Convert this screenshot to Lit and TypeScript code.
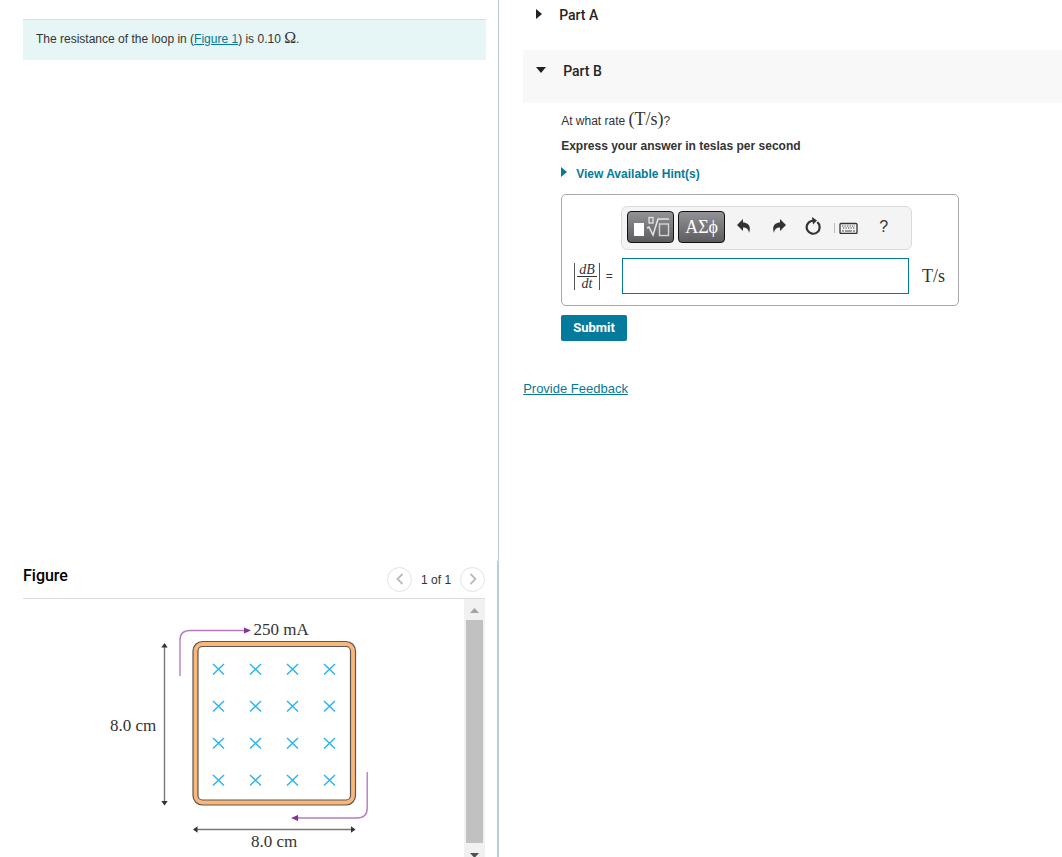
import { LitElement, html, svg, css } from "lit";
import { customElement, state } from "lit/decorators.js";

@customElement("loop-figure")
class LoopFigure extends LitElement {
  static styles = css`
    :host { display: block; }
    svg { display: block; }
    text { font-family: "Liberation Serif", serif; font-size: 17px; fill: #333; }
    .cross { stroke: #2eb4ee; stroke-width: 1.5; }
    .dim { stroke: #777; stroke-width: 1.4; }
    .head { fill: #333; }
    .current { stroke: #b57cc2; stroke-width: 1.4; fill: none; }
    .current-head { fill: #86309a; }
  `;

  render() {
    const steps = [0, 1, 2, 3];
    return html`
      <svg width="441" height="258" viewBox="23 599 441 258" role="img" aria-label="Square loop with current arrows">
        <path class="current" d="M180 676V640Q180 630.500 190 630.500H246" />
        <path class="current-head" d="M251 630.500l-7-3v6z" />
        <text x="253.500" y="635">250 mA</text>
        <rect x="195.500" y="644" width="157.500" height="158.500" rx="7" fill="none" stroke="#5d5651" stroke-width="6.200" />
        <rect x="195.500" y="644" width="157.500" height="158.500" rx="7" fill="none" stroke="#fab77c" stroke-width="3.800" />
        ${steps.map((r) => steps.map((c) => svg`
          <path class="cross" d="M${213 + c * 37} ${664 + r * 37}l11 10.500m0 -10.500l-11 10.500" />`))}
        <path class="dim" d="M164.500 646V803" />
        <path class="head" d="M164.500 643l3.200 4.500h-6.400zM164.500 805.500l3.200-4.500h-6.400z" />
        <text x="110" y="731">8.0 cm</text>
        <path class="dim" d="M196 829.500H352" />
        <path class="head" d="M193 829.500l4.500-3.200v6.400zM355.500 829.500l-4.500-3.200v6.400z" />
        <text x="251" y="847">8.0 cm</text>
        <path class="current" d="M367.200 772V808Q367.200 818 357 818H297" />
        <path class="current-head" d="M291 818l7-3v6z" />
      </svg>
    `;
  }
}

@customElement("app-root")
class AppRoot extends LitElement {
  @state() private answer = "";

  static styles = css`
    * { box-sizing: border-box; }
    :host {
      display: grid;
      grid-template-columns: 47fr 53fr;
      min-height: 100vh;
      background: #fff;
      color: #333;
      font: 12px/16px "Liberation Sans", sans-serif;
    }
    a { color: #047a9c; }
    button { font: inherit; cursor: pointer; }
    .math { font-family: "Liberation Serif", serif; font-size: 18px; line-height: 16px; }
    .ohm { font-size: 16px; }

    .left { display: flex; flex-direction: column; min-width: 0; }
    .problem { flex: 1; border-right: 1px solid #b9cbdb; padding: 19px 12px 0 23px; }
    .statement {
      background: #e6f5f6;
      border-top: 1px solid #d9dede;
      padding: 10px 13px 13px;
    }
    .statement p { margin: 0; }
    .figure { border-right: 2px solid #b8cde0; padding: 0 12px 0 23px; }
    .figure-head {
      display: flex;
      align-items: center;
      justify-content: space-between;
      height: 38px;
      border-bottom: 1px solid #dcdcdc;
    }
    h2 { margin: 0; padding-bottom: 8px; color: #000; font: 500 16px/20px Roboto, sans-serif; }
    .pager { display: flex; align-items: center; gap: 9px; }
    .round {
      display: grid;
      place-items: center;
      width: 25px;
      height: 25px;
      padding: 0;
      border: 1px solid #e3e3e3;
      border-radius: 50%;
      background: #fff;
    }
    .figure-body { display: flex; height: 258px; overflow: hidden; }
    .figure-body loop-figure { flex: 1; min-width: 0; }
    .scroll { display: flex; flex-direction: column; align-items: center; width: 21px; background: #f1f1f1; }
    .scroll svg { display: block; flex: none; }
    .thumb { flex: 1; width: 17px; background: #c1c1c1; }

    .right { padding-left: 24px; min-width: 0; }
    .part {
      display: flex;
      align-items: center;
      gap: 16px;
      width: 100%;
      border: 0;
      padding: 0 12px;
      background: none;
      text-align: left;
      color: #252525;
      font: 500 14px/20px Roboto, sans-serif;
    }
    .part svg { flex: none; }
    .part-a { height: 50px; padding-bottom: 20px; }
    .part-b { height: 53px; padding-bottom: 11px; background: #f8f8f8; }
    .question { padding: 8px 38px 0; }
    .question p { margin: 0 0 9px; }
    .hint {
      display: flex;
      align-items: center;
      gap: 9px;
      border: 0;
      padding: 0;
      margin-top: 12px;
      background: none;
      color: #047a9c;
      font-weight: bold;
    }
    .answer {
      display: grid;
      grid-template-columns: 48px 1fr 36px;
      row-gap: 8px;
      align-items: center;
      max-width: 398px;
      margin-top: 12px;
      padding: 11px 13px 11px 12px;
      border: 1px solid #a9a9a9;
      border-radius: 5px;
    }
    .tools {
      grid-column: 2;
      display: flex;
      align-items: center;
      height: 44px;
      margin: 0 -3px 0 -1px;
      padding: 0 5px 3px;
      border: 1px solid #dcdcdc;
      border-radius: 6px;
      background: #f4f4f4;
    }
    .dark {
      width: 47px;
      height: 32px;
      padding: 0;
      border: 1px solid #111;
      border-radius: 4px;
      background: linear-gradient(#929297, #5d5d60);
      color: #fff;
      font: 18px/28px "Liberation Serif", serif;
    }
    .dark + .dark { margin: 0 1px 0 4px; }
    .dark svg { display: block; margin: auto; }
    .icon {
      display: grid;
      place-items: center;
      width: 35px;
      height: 32px;
      padding: 0;
      border: 0;
      background: none;
      color: #333;
      font-size: 16px;
    }
    .label { grid-column: 1; grid-row: 2; display: flex; align-items: center; gap: 6px; }
    .frac { display: grid; padding: 0 2px; border: solid #555; border-width: 0 1px; }
    .frac span {
      font: italic 14px/13px "Liberation Serif", serif;
      text-align: center;
      padding: 0 2px;
    }
    .frac .num { border-bottom: 1px solid #333; }
    .field {
      grid-column: 2;
      width: 100%;
      height: 36px;
      border: 1px solid #047a9c;
      border-radius: 0;
      padding: 0 8px;
      font: inherit;
      outline: none;
    }
    .unit { text-align: right; }
    .submit {
      display: block;
      height: 26px;
      margin-top: 9px;
      padding: 0 12px;
      border: 0;
      border-radius: 2px;
      background: #047a9c;
      color: #fff;
      font: bold 13px/24px Roboto, sans-serif;
    }
    .feedback { display: inline-block; margin-top: 38px; font-size: 13px; line-height: 20px; }
  `;

  render() {
    return html`
      <section class="left">
        <div class="problem">
          <div class="statement">
            <p>The resistance of the loop in (<a href="#figure">Figure 1</a>) is 0.10 <span class="math ohm">Ω</span>.</p>
          </div>
        </div>
        <div class="figure" id="figure">
          <header class="figure-head">
            <h2>Figure</h2>
            <div class="pager">
              <button class="round" aria-label="Previous figure">
                <svg width="12" height="14" fill="none" stroke="#bbb" stroke-width="1.800"><path d="M8.500 1L3.500 6l5 5" /></svg>
              </button>
              <span>1 of 1</span>
              <button class="round" aria-label="Next figure">
                <svg width="12" height="14" fill="none" stroke="#bbb" stroke-width="1.800"><path d="M3.500 1l5 5-5 5" /></svg>
              </button>
            </div>
          </header>
          <div class="figure-body">
            <loop-figure></loop-figure>
            <div class="scroll" aria-hidden="true">
              <svg width="21" height="21"><path d="M6 14h9l-4.500-5z" fill="#a3a3a3" /></svg>
              <div class="thumb"></div>
              <svg width="21" height="14"><path d="M6 10h9l-4.500 5z" fill="#505050" /></svg>
            </div>
          </div>
        </div>
      </section>

      <main class="right">
        <button class="part part-a" aria-expanded="false">
          <svg width="8" height="12"><path d="M1 0v10l6-5z" fill="#222" /></svg>
          Part A
        </button>
        <button class="part part-b" aria-expanded="true">
          <svg width="12" height="12"><path d="M1 2h10l-5 6z" fill="#222" /></svg>
          Part B
        </button>
        <div class="question">
          <p>At what rate <span class="math">(T/s)</span>?</p>
          <p><b>Express your answer in teslas per second</b></p>
          <button class="hint">
            <svg width="6" height="14"><path d="M0 0v10l6-5z" fill="#047a9c" /></svg>
            View Available Hint(s)
          </button>
          <div class="answer">
            <div class="tools">
              <button class="dark" aria-label="Templates">
                <svg width="38" height="22" fill="none">
                  <rect x="2" y="7" width="10" height="13" fill="#fff" />
                  <rect x="17" y="1.500" width="4" height="5.500" stroke="#e5e5e5" stroke-width="1.300" />
                  <path d="M15 12l2-1 4 8 5-16h11" stroke="#e5e5e5" stroke-width="1.500" />
                  <rect x="27.500" y="8" width="9" height="11.500" stroke="#d5d5d5" stroke-width="1.400" />
                </svg>
              </button>
              <button class="dark">ΑΣϕ</button>
              <button class="icon" aria-label="Undo">
                <svg width="14" height="16" fill="currentColor"><path d="M6 0v3.500C11 3.500 14.500 7 12 14 11.500 10 9.500 8.500 6 8.500V12L0 6z" /></svg>
              </button>
              <button class="icon" aria-label="Redo">
                <svg width="14" height="16" fill="currentColor"><path d="M8 0v3.500C3 3.500-.5 7 2 14 2.500 10 4.500 8.500 8 8.500V12l6-6z" /></svg>
              </button>
              <button class="icon" aria-label="Reset">
                <svg width="17" height="20" fill="none"><path d="M12.300 5.200a6.500 6.500 0 1 1-6-1.200L8.500 3.600" stroke="currentColor" stroke-width="2.200" /><path d="M7 0l5 3.500-4 4z" fill="currentColor" /></svg>
              </button>
              <button class="icon" aria-label="Keyboard shortcuts">
                <svg width="29" height="14" fill="none">
                  <path d="M.5 3v10" stroke="#bbb" />
                  <rect x="6" y="3.500" width="17" height="10" rx="1" stroke="#333" stroke-width="1.300" />
                  <path d="M8 6h13M9 8h12" stroke="#444" stroke-width="1.200" stroke-dasharray="1.300 1.200" />
                  <path d="M8 11h2m1 0h7m1 0h2" stroke="#444" stroke-width="1.200" />
                </svg>
              </button>
              <button class="icon" aria-label="Help">?</button>
            </div>
            <label class="label" for="answer">
              <span class="frac"><span class="num">dB</span><span>dt</span></span>
              =
            </label>
            <input class="field" id="answer" .value=${this.answer}
              @input=${(e: Event) => (this.answer = (e.target as HTMLInputElement).value)} />
            <span class="unit math">T/s</span>
          </div>
          <button class="submit">Submit</button>
        </div>
        <a class="feedback" href="#feedback">Provide Feedback</a>
      </main>
    `;
  }
}
